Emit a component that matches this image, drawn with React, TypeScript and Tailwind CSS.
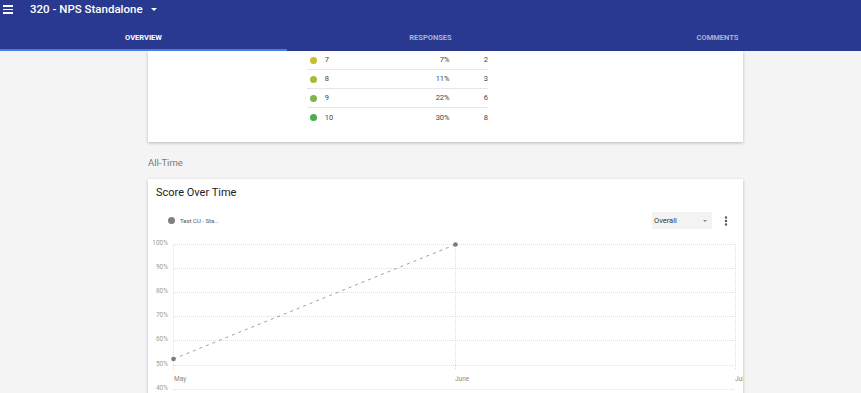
import { EllipsisVertical } from 'lucide-react'

const ROWS = [
  { score: '7', pct: '7%', count: '2', color: '#c0c22d' },
  { score: '8', pct: '11%', count: '3', color: '#9fbe3a' },
  { score: '9', pct: '22%', count: '6', color: '#7ab648' },
  { score: '10', pct: '30%', count: '8', color: '#4cae50' }
]

const GRID_Y = [10, 34, 58, 82, 106, 131, 155]
const Y_LABELS = ['100%', '90%', '80%', '70%', '60%', '50%', '40%']

function Header() {
  return (
    <div className="bg-[#28398f] text-white">
      <div className="flex h-[19px] items-center">
        <div className="ml-[3px] flex w-[10px] flex-col gap-[2px]">
          <span className="h-[1.5px] bg-white" />
          <span className="h-[1.5px] bg-white" />
          <span className="h-[1.5px] bg-white" />
        </div>
        <span className="ml-[17px] text-[11.5px] font-medium leading-none">320 - NPS Standalone</span>
        <span className="ml-[8px] h-0 w-0 border-x-[3.5px] border-t-[3.5px] border-x-transparent border-t-white" />
      </div>
      <div className="grid h-[32px] grid-cols-3 text-[7.5px] font-bold uppercase">
        <div className="flex flex-col items-center justify-between pt-[14px]">
          <span className="leading-[10px] text-white">Overview</span>
          <span className="h-[2px] w-full bg-[#4b7be5]" />
        </div>
        <div className="flex justify-center pt-[14px]">
          <span className="leading-[10px] text-[#a9b2dc]">Responses</span>
        </div>
        <div className="flex justify-center pt-[14px]">
          <span className="leading-[10px] text-[#a9b2dc]">Comments</span>
        </div>
      </div>
    </div>
  )
}

function DistributionCard() {
  return (
    <div className="ml-[148px] w-[595px] bg-white pb-[15px] shadow-[0_1px_3px_rgba(0,0,0,0.25)]">
      <div className="ml-[159px] w-[181px] text-[7.5px] text-[#444]">
        {ROWS.map((r, i) => (
          <div
            key={r.score}
            className={`flex h-[19px] items-center ${i < ROWS.length - 1 ? 'border-b border-[#e6e6e6]' : ''}`}
          >
            <span className="ml-[3px] h-[7px] w-[7px] rounded-full" style={{ backgroundColor: r.color }} />
            <span className="ml-[8px] w-[40px]">{r.score}</span>
            <span className="w-[90px] text-right">{r.pct}</span>
            <span className="w-[40px] text-right">{r.count}</span>
          </div>
        ))}
      </div>
    </div>
  )
}

function Chart() {
  return (
    <svg width="595" height="170" className="mt-[5px] block" style={{ fontFamily: 'Roboto, sans-serif' }}>
      {GRID_Y.map((y) => (
        <line key={y} x1="25" x2="587" y1={y + 0.5} y2={y + 0.5} stroke="#dedede" strokeWidth="1" strokeDasharray="1 1" />
      ))}
      {[25, 307, 587].map((x) => (
        <line key={x} x1={x + 0.5} x2={x + 0.5} y1="10" y2="136" stroke="#dedede" strokeWidth="1" strokeDasharray="1 1" />
      ))}
      {Y_LABELS.map((l, i) => (
        <text key={l} x="20" y={GRID_Y[i] + 0.5} textAnchor="end" fontSize="6.5" fill="#a39e90">
          {l}
        </text>
      ))}
      <text x="26" y="146.5" fontSize="6.5" fill="#8a8a8a">May</text>
      <text x="307" y="146.5" fontSize="6.5" fill="#8a8a8a">June</text>
      <text x="587" y="146.5" fontSize="6.5" fill="#8a8a8a">July</text>
      <line x1="25.5" y1="125" x2="307.5" y2="10.5" stroke="#a0a0a0" strokeWidth="1" strokeDasharray="3 4" />
      <circle cx="25.5" cy="125" r="2.3" fill="#7a7a7a" />
      <circle cx="307.5" cy="10.5" r="2.3" fill="#7a7a7a" />
    </svg>
  )
}

function ScoreCard() {
  return (
    <div className="ml-[148px] w-[595px] overflow-hidden bg-white shadow-[0_1px_3px_rgba(0,0,0,0.25)]">
      <div className="ml-[8px] pt-[8px] text-[11px] leading-[12px] text-[#222]">Score Over Time</div>
      <div className="mt-[13px] flex h-[17px] items-center">
        <span className="ml-[20px] h-[7px] w-[7px] rounded-full bg-[#808080]" />
        <span className="ml-[5px] text-[6px] text-[#555]">Test CU - Sta...</span>
        <div className="ml-auto flex h-[17px] w-[60px] items-center justify-between bg-[#f3f3f3] pl-[2px] pr-[5px]">
          <span className="text-[7.5px] text-[#333]">Overall</span>
          <span className="h-0 w-0 border-x-[2.5px] border-t-[2.5px] border-x-transparent border-t-[#888]" />
        </div>
        <EllipsisVertical size={12} strokeWidth={3} className="mr-[11px] ml-[8px] text-[#555]" />
      </div>
      <Chart />
    </div>
  )
}

export default function App() {
  return (
    <div className="h-[393px] overflow-hidden bg-[#f4f4f4]" style={{ fontFamily: 'Roboto, "Liberation Sans", sans-serif' }}>
      <Header />
      <DistributionCard />
      <div className="ml-[148px] pt-[16px] pb-[11px] text-[9.5px] leading-[10px] text-[#7a7a7a]">All-Time</div>
      <ScoreCard />
    </div>
  )
}
